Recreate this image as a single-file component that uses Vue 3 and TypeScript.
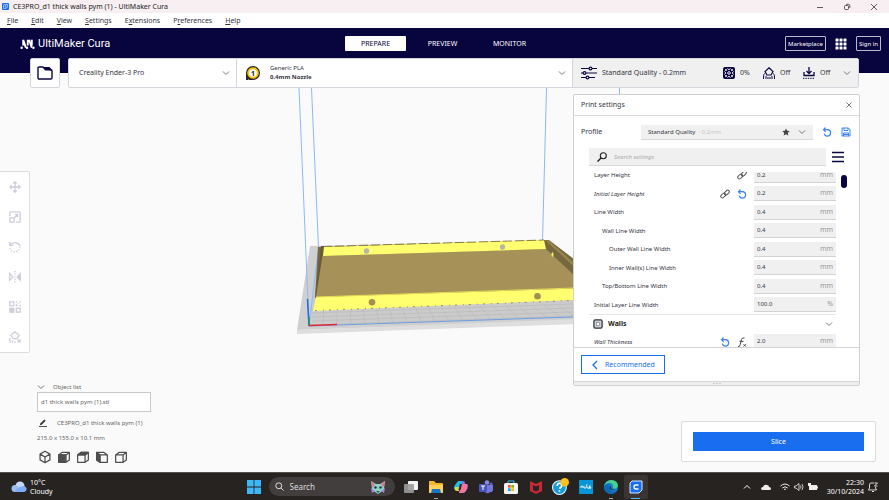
<script setup lang="ts">
import { ref } from 'vue'

interface Setting {
  label: string
  value: string
  unit: string
  level: number
  icons: string[]
  changed?: boolean
}

const menus = ['File', 'Edit', 'View', 'Settings', 'Extensions', 'Preferences', 'Help']
const menuKeys = [0, 0, 0, 0, 1, 1, 0]
const stages = ['PREPARE', 'PREVIEW', 'MONITOR']
const activeStage = ref('PREPARE')
const search = ref('')
const profile = ref('Standard Quality')
const objectName = ref('d1 thick walls pym (1).stl')

const settings = ref<Setting[]>([
  { label: 'Layer Height', value: '0.2', unit: 'mm', level: 0, icons: ['link'] },
  { label: 'Initial Layer Height', value: '0.2', unit: 'mm', level: 0, icons: ['link', 'reset'], changed: true },
  { label: 'Line Width', value: '0.4', unit: 'mm', level: 0, icons: [] },
  { label: 'Wall Line Width', value: '0.4', unit: 'mm', level: 1, icons: [] },
  { label: 'Outer Wall Line Width', value: '0.4', unit: 'mm', level: 2, icons: [] },
  { label: 'Inner Wall(s) Line Width', value: '0.4', unit: 'mm', level: 2, icons: [] },
  { label: 'Top/Bottom Line Width', value: '0.4', unit: 'mm', level: 1, icons: [] },
  { label: 'Initial Layer Line Width', value: '100.0', unit: '%', level: 0, icons: [] },
  { label: 'Walls', value: '', unit: '', level: -1, icons: [] },
  { label: 'Wall Thickness', value: '2.0', unit: 'mm', level: 0, icons: ['reset', 'fx'], changed: true },
])

const tools = ['Move', 'Scale', 'Rotate', 'Mirror', 'Per model settings', 'Support blocker']
const views = ['3D view', 'Front view', 'Top view', 'Left view', 'Right view']
const viewFaces = ['', 'M2 6h8v8H2z', 'M2 6l4-3h9l-4 3z', 'M2 3l4 3v9l-4-3z', 'M11 6l4-3v9l-4 3z']

const gridColumns = Array.from({ length: 20 }, (_, i) => i)
const gridRows = Array.from({ length: 5 }, (_, i) => i)
</script>

<template>
  <div class="window">
    <header class="titlebar">
      <svg class="app-icon" viewBox="0 0 14 14"><rect width="14" height="14" rx="2" fill="#196ef0" /><path d="M4 3h7v5l-3 3H3V4z" fill="none" stroke="#fff" /><path d="M9 5.500H6v3h3" fill="none" stroke="#fff" /></svg>
      <span class="title">CE3PRO_d1 thick walls pym (1) - UltiMaker Cura</span>
      <button class="win" aria-label="Minimise"><svg viewBox="0 0 8 8"><path d="M1 4.500h6" /></svg></button>
      <button class="win" aria-label="Restore"><svg viewBox="0 0 8 8"><rect x="1.500" y="2.500" width="4" height="4" rx="1" /><path d="M3 1.300h2.500a1.300 1.300 0 0 1 1.300 1.300V5" /></svg></button>
      <button class="win" aria-label="Close"><svg viewBox="0 0 8 8"><path d="M1 1l6 6M7 1L1 7" /></svg></button>
    </header>

    <nav class="menubar">
      <a v-for="(menu, i) in menus" :key="menu" href="#">{{ menu.slice(0, menuKeys[i]) }}<u>{{ menu.charAt(menuKeys[i]) }}</u>{{ menu.slice(menuKeys[i] + 1) }}</a>
    </nav>

    <div class="topbar">
      <div class="brand">
        <svg viewBox="0 0 28 22" fill="none" stroke="#fff" stroke-width="3.600" stroke-linecap="round"><path d="M6 3v11M6 3l5 15M14.500 3v11M17 3l5 15" stroke-linecap="butt" /><path d="M3 18h.1M13 18h.1M25 18h.1" stroke-width="4.500" /><path d="M22 3v11" stroke-linecap="butt" /></svg>
        <span>UltiMaker Cura</span>
      </div>
      <div class="stages">
        <button v-for="stage in stages" :key="stage" :class="{ active: stage === activeStage }" @click="activeStage = stage">{{ stage }}</button>
      </div>
      <div class="account">
        <button>Marketplace</button>
        <button class="apps" aria-label="Applications"><svg viewBox="0 0 12 12" fill="#fff"><template v-for="y in 3" :key="y"><rect v-for="x in 3" :key="x" :x="x * 4 - 3.500" :y="y * 4 - 3.500" width="3" height="3" rx=".6" /></template></svg></button>
        <button>Sign in</button>
      </div>
    </div>

    <div class="config">
      <button class="folder" aria-label="Open file"><svg viewBox="0 0 16 14"><path d="M1 11.500V2.200Q1 1 2.200 1H6l2.500 2.700h5.300q1.200 0 1.200 1.200v6.900q0 1.200-1.200 1.200H2.200Q1 13 1 11.800z" fill="none" stroke="#0b0740" stroke-width="1.400" /><path d="M6.500 1h6L15 3.800v1L8.500 3.500z" fill="#0b0740" /></svg></button>
      <div class="selectors">
        <button class="machine"><span>Creality Ender-3 Pro</span><svg class="chevron" viewBox="0 0 8 8"><path d="M1 2.500l3 3 3-3" /></svg></button>
        <button class="material">
          <svg class="spool" viewBox="0 0 16 16"><path d="M1 15V8a7 7 0 1 1 7 7H4l-1-1v1z" fill="#262626" /><circle cx="8" cy="8" r="5.800" fill="#ffc20f" /><circle cx="8" cy="8" r="3.800" fill="#fff" /><text x="8" y="10.500" text-anchor="middle">1</text></svg>
          <span class="material-name"><span>Generic PLA</span><strong>0.4mm Nozzle</strong></span>
          <svg class="chevron" viewBox="0 0 8 8"><path d="M1 2.500l3 3 3-3" /></svg>
        </button>
        <button class="summary">
          <svg class="sliders" viewBox="0 0 16 14" fill="none" stroke="#0b0740" stroke-width="1.200"><path d="M0 2.500h8M11 2.500h5M0 7h2M5 7h11M0 11.500h5M8 11.500h6" /><circle cx="9.500" cy="2.500" r="1.400" /><circle cx="3.500" cy="7" r="1.400" /><circle cx="6.500" cy="11.500" r="1.400" /></svg>
          <span class="quality">Standard Quality - 0.2mm</span>
          <svg class="ico" viewBox="0 0 12 12"><rect width="12" height="12" rx="2" fill="#0b0740" /><g fill="none" stroke="#f0f0f0" stroke-width="1"><circle cx="6" cy="6" r="1.300" /><path d="M4.500 1.500Q6 4 7.500 1.500M4.500 10.500Q6 8 7.500 10.500M1.500 4.500Q4 6 1.500 7.500M10.500 4.500Q8 6 10.500 7.500" /></g><g fill="#f0f0f0"><circle cx="3" cy="3" r="1" /><circle cx="9" cy="3" r="1" /><circle cx="3" cy="9" r="1" /><circle cx="9" cy="9" r="1" /></g></svg>
          <span class="stat">0%</span>
          <svg class="ico" viewBox="0 0 12 12" fill="none" stroke="#0b0740"><path d="M6 .8L10 4.500 8 8H4L2 4.500z" stroke-width="1.200" /><path d="M1.500 6.500C.5 8 .5 9 .5 12M3 9v3M5 10v2M7 10v2M9 9v3M10.500 6.500c1 1.500 1 2.500 1 5.500" /></svg>
          <span class="stat">Off</span>
          <svg class="ico" viewBox="0 0 12 12" fill="none" stroke="#0b0740"><path d="M6 0v6M3.500 4L6 6.500 8.500 4M1 5v3.500h10V5" stroke-width="1.300" /><path d="M0 11.300h12" stroke-dasharray="1.400 1" /></svg>
          <span class="stat">Off</span>
          <svg class="chevron" viewBox="0 0 8 8"><path d="M1 2.500l3 3 3-3" /></svg>
        </button>
      </div>
    </div>

    <main class="workspace">
      <svg class="scene" viewBox="0 88 889 384" preserveAspectRatio="xMidYMin slice" aria-hidden="true">
        <polygon points="310,246 545,240 660,318 297,330" fill="#d0d0d0" />
        <polygon points="297,330 660,316 660,321 297,334" fill="#dedede" />
        <polygon points="319,248 545,242 650,315 309,326" fill="#cbcbcb" />
        <g stroke="#b5b5b9" stroke-width=".5">
          <path v-for="r in gridRows" :key="'r' + r" :d="`M312 ${309 + r * 4}L660 ${297 + r * 4}`" />
          <path v-for="c in gridColumns" :key="'c' + c" :d="`M${311 + c * 13} 306L${309 + c * 14} ${326 - c * .5}`" />
        </g>
        <g fill="none" stroke="#8cb9f5"><path d="M299 88l10 238M311.500 88l7 160-9.500 78M546.500 88L542.500 241M619.500 88v6" /><path d="M309 326l351-12" stroke="#6c9de4" /></g>
        <polygon points="318,247 545,240 549,240 660,325 660,290 315,298" fill="#76683f" />
        <polygon points="321,256 546,249 590,290 315,297" fill="#a69159" />
        <polygon points="321,246 324,246 316,297 315,297" fill="#685b35" />
        <polygon points="324,247 544,240 546,249 323,256" fill="#ffff70" />
        <polygon points="316,297 590,288 600,299 313,311" fill="#ffff70" />
        <path d="M545 240l4 .5 41 37v4z" fill="#98844d" />
        <path d="M323 246.500L544 240" fill="none" stroke="#79682f" stroke-dasharray="9 3" stroke-width=".8" />
        <path d="M316 297l258-9" fill="none" stroke="#e5d957" />
        <path d="M315 310.500l258-10" fill="none" stroke="#77703f" stroke-dasharray="2 6 1 5" stroke-width=".7" />
        <circle cx="366.500" cy="251" r="2.700" fill="#b7b5aa" /><circle cx="502.500" cy="247" r="2.700" fill="#b7b5aa" />
        <circle cx="372" cy="302.300" r="3.300" fill="#a48e50" /><circle cx="537.500" cy="296.300" r="3.300" fill="#a48e50" />
        <ellipse cx="552.500" cy="254.500" rx="1" ry="2.200" fill="#f7f069" />
        <path d="M307.500 299l1.500 27" stroke="#1769ed" stroke-width="1.500" /><path d="M309 326v-9" stroke="#17965d" stroke-width="1.400" /><path d="M309 325.500l28-1" stroke="#df2b35" stroke-width="1.600" />
      </svg>

      <aside class="left">
        <div class="tools">
          <button v-for="(tool, i) in tools" :key="tool" :aria-label="tool" disabled>
            <svg viewBox="0 0 14 14" fill="none" stroke="#cfccdc" stroke-width="1.500">
              <path v-if="i === 0" d="M7 1v12M1 7h12M5 3l2-2 2 2M5 11l2 2 2-2M3 5L1 7l2 2M11 5l2 2-2 2" />
              <template v-else-if="i === 1"><path d="M1 6V2q0-1 1-1h10q1 0 1 1v10q0 1-1 1H8" /><rect x="1" y="8" width="5" height="5" /><path d="M6 8l4-4M7 4h3v3" /></template>
              <template v-else-if="i === 2"><path d="M1 1v4h4M1.500 4.500C4 .5 11 1 13 6" /><path d="M1 8c1 6 10 7 12-1" stroke-dasharray="1.600 1.600" /></template>
              <template v-else-if="i === 3"><path d="M.7 3v8L4.500 7z" /><path d="M13.300 3v8L9.500 7z" fill="#cfccdc" /><path d="M7 0v14" stroke-dasharray="1.500 1.500" /></template>
              <template v-else-if="i === 4"><rect x="1" y="1" width="4.500" height="4.500" /><rect x="1" y="8.500" width="4.500" height="4.500" fill="#cfccdc" /><rect x="8.500" y="8.500" width="4.500" height="4.500" /><path d="M8 1h2M12 1h2M8 3.500l1 1M11 3h1M12 5.500h2M8 5.500h2" /></template>
              <template v-else><path d="M7 .8L12 5 9 9H5L2 5z" /><path d="M1 8v6M4 11v3M7 12v2M10 10l3.500 3.500M13.500 10L10 13.500" /></template>
            </svg>
          </button>
        </div>
        <section class="objects">
          <button class="toggle"><svg class="chevron" viewBox="0 0 8 8"><path d="M1 2.500l3 3 3-3" /></svg><span>Object list</span></button>
          <input v-model="objectName" aria-label="Object" class="object" />
          <div class="job"><svg viewBox="0 0 9 9"><path d="M0 8.500h9" stroke="#333" /><path d="M1 7l.5-2L6 .5 7.500 2 3 6.500z" fill="#333" /></svg><span>CE3PRO_d1 thick walls pym (1)</span></div>
          <p>215.0 x 155.0 x 10.1 mm</p>
          <div class="views">
            <button v-for="(view, i) in views" :key="view" :aria-label="view">
              <svg viewBox="0 0 17 17" fill="none" stroke="#4e4e4e" stroke-width="1.500" stroke-linejoin="round">
                <path v-if="i === 0" d="M8.500 1.500l6 3.500v7l-6 3.500-6-3.500V5zM2.500 5l6 3.500L14.500 5M8.500 8.500v7" />
                <template v-else-if="i === 3"><path d="M6 6h9v9H6zM2 3l4 3v9l-4-3zM2 3h9l4 3" /><path :d="viewFaces[i]" fill="#4e4e4e" /></template>
                <template v-else><path d="M2 6h9v9H2zM2 6l4-3h9l-4 3M15 3v9l-4 3" /><path v-if="i < 3" :d="viewFaces[i]" fill="#4e4e4e" /></template>
              </svg>
            </button>
          </div>
        </section>
      </aside>

      <div class="right">
        <section class="panel">
          <div class="panel-head"><span>Print settings</span><button aria-label="Close settings"><svg viewBox="0 0 8 8"><path d="M1.500 1.500l5 5M6.500 1.500l-5 5" /></svg></button></div>
          <div class="profile">
            <label for="profile">Profile</label>
            <div class="profile-box">
              <select id="profile" v-model="profile"><option>Standard Quality</option></select>
              <span class="muted">- 0.2mm</span>
              <svg class="star" viewBox="0 0 10 10"><path d="M5 .5l1.400 3 3.200.4-2.400 2.200.7 3.300L5 7.700 2.100 9.400l.7-3.300L.4 3.900l3.200-.4z" fill="#444" /></svg>
              <svg class="chevron" viewBox="0 0 8 8"><path d="M1 2.500l3 3 3-3" /></svg>
            </div>
            <button aria-label="Discard changes"><svg viewBox="0 0 10 10" fill="none" stroke="#3b82f2" stroke-width="1.200"><path d="M3.500.5L1.500 2.700l2.200 2.200M1.500 2.700H5.500a3.200 3.200 0 1 1-3.200 4" /></svg></button>
            <button aria-label="Save profile"><svg viewBox="0 0 10 10" fill="none" stroke="#3b82f2"><path d="M1 1h6.500L9 2.500V9H1zM3 1v2.500h4V1M2.500 9V6h5v3M3 7.500h4" /></svg></button>
          </div>
          <div class="searchline">
            <div class="search">
              <svg viewBox="0 0 10 10" fill="none" stroke="#222"><circle cx="6.300" cy="3.700" r="3" stroke-width="1.100" /><path d="M4 6L.5 9.500" stroke-width="1.500" /></svg>
              <input v-model="search" aria-label="Search settings" placeholder="Search settings" />
            </div>
            <button aria-label="Setting visibility"><svg viewBox="0 0 12 12"><path d="M0 1.500h12M0 6h12M0 10.500h12" stroke="#0b0740" stroke-width="1.300" /></svg></button>
          </div>
          <div class="list">
            <div class="rows">
              <template v-for="(item, i) in settings" :key="item.label">
                <button v-if="item.level < 0" class="category">
                  <svg class="wall" viewBox="0 0 10 10"><rect x=".9" y=".9" width="8.200" height="8.200" rx="1.300" fill="#ccd0d4" stroke="#33363e" stroke-width="1.300" /><rect x="3.500" y="3.500" width="3" height="3" fill="#fff" stroke="#777" stroke-width=".6" /></svg>
                  <strong>{{ item.label }}</strong>
                  <svg class="chevron" viewBox="0 0 8 8"><path d="M1 2.500l3 3 3-3" /></svg>
                </button>
                <div v-else class="row" :class="['level-' + item.level, { changed: item.changed }]">
                  <label :for="'setting-' + i">{{ item.label }}</label>
                  <svg v-for="icon in item.icons" :key="icon" class="row-icon" viewBox="0 0 10 10" fill="none">
                    <g v-if="icon === 'link'" stroke="#555"><rect x="4" y="2" width="5.600" height="3.200" rx="1.600" transform="rotate(-45 6.800 3.600)" /><rect x=".4" y="4.900" width="5.600" height="3.200" rx="1.600" transform="rotate(-45 3.200 6.500)" /></g>
                    <path v-else-if="icon === 'reset'" d="M3.500.5L1.500 2.700l2.200 2.200M1.500 2.700H5.500a3.200 3.200 0 1 1-3.200 4" stroke="#3b82f2" stroke-width="1.200" />
                    <path v-else d="M1 9.500Q2.800 10 3.300 7.500L4.500 2.500Q5 .3 7.500 1M2.500 4.300h4M6.500 7.200l2.300 2.300M8.800 7.200L6.500 9.500" stroke="#444" />
                  </svg>
                  <div class="field"><input :id="'setting-' + i" v-model="item.value" /><span>{{ item.unit }}</span></div>
                </div>
              </template>
            </div>
            <div class="scrollbar"><i></i></div>
          </div>
          <div class="panel-foot"><button><svg viewBox="0 0 8 10"><path d="M6 1L2 5l4 4" fill="none" stroke="#196ef0" stroke-width="1.300" /></svg><span>Recommended</span></button></div>
          <div class="grip"><i></i><i></i><i></i></div>
        </section>
        <section class="action"><button>Slice</button></section>
      </div>
    </main>

    <footer class="taskbar">
      <div class="weather">
        <svg viewBox="0 0 16 12"><circle cx="9" cy="5" r="4.500" fill="#c5d8fa" /><circle cx="4" cy="7.500" r="3.500" fill="#9bbcf4" /><path d="M4 11h9a3 3 0 1 0-2-5.500Q6 6 4 11z" fill="#7facf5" /></svg>
        <span>10°C<br />Cloudy</span>
      </div>
      <div class="dock">
        <button aria-label="Start"><svg viewBox="0 0 14 14" fill="#3bb8f5"><path d="M0 0h6.600v6.600H0zM7.400 0H14v6.600H7.400zM0 7.400h6.600V14H0zM7.400 7.400H14V14H7.400z" /></svg></button>
        <label class="find"><svg viewBox="0 0 10 10" fill="none" stroke="#eee"><circle cx="4.200" cy="4.200" r="3.300" /><path d="M6.700 6.700L9.500 9.500" /></svg><input aria-label="Search Windows" placeholder="Search" />
          <svg class="mascot" viewBox="0 0 16 14"><path d="M1 1l5 3h4l5-3-1 8-3 3-3 2-3-2-3-3z" fill="#8cd6c4" /><path d="M1 1l4 3-2 4zM15 1l-4 3 2 4z" fill="#df7692" /><path d="M1 8l4 3-3 2zM15 8l-4 3 3 2z" fill="#b681dd" /><circle cx="5.500" cy="7.500" r="1.200" fill="#273549" /><circle cx="10.500" cy="7.500" r="1.200" fill="#273549" /><path d="M6 11h4l-2 2z" fill="#3c514e" /></svg>
        </label>
        <button aria-label="Task view"><svg viewBox="0 0 14 14"><rect x="4" y="1" width="10" height="9" rx="1" fill="#f4f4f4" /><rect y="4" width="10" height="9" rx="1" fill="#9b9b9b" opacity=".9" /></svg></button>
        <button class="running" aria-label="File Explorer"><svg viewBox="0 0 14 14"><path d="M0 1h5l2 2h6q1 0 1 1v9H0z" fill="#f2b92b" /><path d="M0 5h14v8H0z" fill="#ffd35b" /><path d="M3 9h8l1 4H2z" fill="#1575cd" /></svg></button>
        <button aria-label="Copilot"><svg viewBox="0 0 14 14"><path d="M4 1h5L6 10H1Q-1 8 1 5z" fill="#29b8e0" /><path d="M1 7h5l-1 4H3Q0 11 1 7z" fill="#d9d84b" /><path d="M9 1q2 0 2 3h2q2 3-1 7-1 2-3 2H5l3-9z" fill="#aa69ec" /><path d="M8 4h5q1 1 0 4l-2 4-3 1H5z" fill="#f4759b" /><path d="M6 4h2L6.500 10h-2z" fill="#282424" /></svg></button>
        <button aria-label="Teams"><svg viewBox="0 0 14 14"><circle cx="8" cy="2.500" r="2.300" fill="#858bf0" /><circle cx="12" cy="4" r="1.500" fill="#6268c8" /><path d="M5 5h9v5q-1 3-3 2-3 3-6-1z" fill="#7378da" /><rect y="4" width="8" height="8" rx="1" fill="#4b53bc" /><path d="M2 6h4M4 6v4" stroke="#fff" /></svg></button>
        <button aria-label="Store"><svg viewBox="0 0 14 14"><path d="M4 3V1h6v2" fill="none" stroke="#48b8ed" /><rect y="3" width="14" height="11" rx="1.500" fill="#f5f5f5" /><path d="M4 5h2.700v2.700H4z" fill="#ef5b2d" /><path d="M7.300 5H10v2.700H7.300z" fill="#7fba00" /><path d="M4 8.300h2.700V11H4z" fill="#19a5e8" /><path d="M7.300 8.300H10V11H7.300z" fill="#fbb614" /></svg></button>
        <button aria-label="McAfee"><svg viewBox="0 0 14 14"><path d="M1 1l6 3 6-3v10l-6 3-6-3zM4 5v5l3 1.500L10 10V5L7 6.500z" fill="#c92936" fill-rule="evenodd" /></svg></button>
        <button class="assistant" aria-label="Help assistant"><svg viewBox="0 0 16 16"><circle cx="7" cy="9" r="6.500" fill="#1c9cd5" stroke="#e7f7ff" /><path d="M4.800 7.500Q5 5 7.300 5T9 8L7 10M7 11.500v1.500" fill="none" stroke="#fff" stroke-width="1.500" /><circle cx="12" cy="4" r="4" fill="#ffc21b" /></svg></button>
        <button aria-label="MyHP"><svg viewBox="0 0 14 14"><rect width="14" height="14" fill="#0795d8" /><path d="M2 8V6l1 .5L4 6v2M5 6v2h2l1-4M8 7h1v2M10 9l1-4M10 7h2l-1 2" fill="none" stroke="#fff" stroke-width=".8" /></svg></button>
        <button class="running" aria-label="Edge"><svg viewBox="0 0 14 14"><circle cx="7" cy="7" r="7" fill="#1583d0" /><path d="M0 7Q1 0 8 0q6 1 6 6-2 4-5 2Q10 3 5 3 2 3 0 7z" fill="#48d18c" /><path d="M0 7q2-4 6-3-3 3 0 6 3 3 7 1-4 4-9 2-4-2-4-6z" fill="#1264b7" /><path d="M7 6q-2 4 5 4-4 1-6-1T7 6z" fill="#282424" /></svg></button>
        <button class="running current" aria-label="Cura"><svg viewBox="0 0 14 14"><path d="M3 1h10v9l-3 3H1V3z" fill="#196ef0" stroke="#dbe9ff" /><path d="M9.500 5H7Q5 5 5 7t2 2h2.500" fill="none" stroke="#fff" stroke-width="1.300" /></svg></button>
      </div>
      <div class="tray">
        <svg viewBox="0 0 10 10"><path d="M2 6.500l3-3 3 3" fill="none" stroke="#fff" /></svg>
        <svg class="cloud" viewBox="0 0 10 10"><path d="M2 8Q0 8 0 6.500T2 5q1-3 4-2 2 0 2 2 2 0 2 1.500T8.500 8z" fill="#eee" /></svg>
        <svg viewBox="0 0 10 10" fill="none" stroke="#eee"><path d="M.5 4Q5 0 9.500 4M2.300 6Q5 3.500 7.700 6M4 7.500q1-1 2 0" /></svg>
        <svg viewBox="0 0 10 10" fill="none" stroke="#eee"><path d="M.5 4H2l3-2.500v7L2 6H.5zM6.500 3.500q1 1.500 0 3M8 2q2 3 0 6" stroke-width=".8" /></svg>
        <svg viewBox="0 0 10 10"><path d="M0 1h3v2h6v1.500h1v2H9V8H1V4H0z" fill="#eee" /></svg>
        <span class="clock">22:30<br />30/10/2024</span>
        <svg viewBox="0 0 10 10" fill="none" stroke="#eee"><path d="M6 1H3q-1.500 0-1.500 2v3L.5 8h8l-1-2V5M4 9.500h2M6.500 1h3L6.500 4h3" stroke-width=".9" /></svg>
      </div>
    </footer>
  </div>
</template>

<style>
body { margin: 0; }
</style>

<style scoped>
* { box-sizing: border-box; }
.window { display: flex; flex-direction: column; min-height: 100vh; background: #fafafa; color: #35353f; font: 7px/10px "Noto Sans", sans-serif; }
button, input, select { font: inherit; color: inherit; border: 0; background: none; padding: 0; margin: 0; min-width: 0; border-radius: 0; }
svg { display: block; flex: none; }
a { color: inherit; text-decoration: none; }
.chevron { width: 8px; height: 8px; fill: none; stroke: #777; }

.titlebar { display: flex; align-items: center; height: 13px; background: #f7eff2; padding: 0 2px; color: #222; }
.app-icon { width: 7px; height: 7px; margin-right: 4px; }
.title { flex: 1; }
.win { width: 27px; height: 13px; display: flex; align-items: center; justify-content: center; }
.win svg { width: 8px; height: 8px; fill: none; stroke: #333; stroke-width: .8; }
.menubar { display: flex; align-items: center; gap: 13px; height: 15px; padding: 0 7px; background: #fff; }
.topbar { display: grid; grid-template-columns: 1fr auto 1fr; align-items: center; height: 45px; padding: 0 8px 14px 4px; background: #08043e; color: #fff; }
.brand { display: flex; align-items: center; gap: 3px; padding-left: 16px; font: 11px/14px Roboto, sans-serif; }
.brand svg { width: 15px; height: 12px; }
.stages { display: flex; gap: 6px; }
.stages button { width: 61px; height: 15px; border-radius: 1px; }
.stages .active { background: #fff; color: #08043e; }
.account { display: flex; justify-content: flex-end; align-items: center; gap: 9px; font-size: 6px; }
.account button { height: 15px; border: 1px solid #bbb9cc; border-radius: 1px; padding: 0 2px; }
.account .apps { border: 0; padding: 0; height: 12px; }
.apps svg { width: 12px; height: 12px; }

.config { display: flex; gap: 8px; height: 30px; margin: -15px 30px 0; position: relative; z-index: 1; }
.folder { width: 30px; display: flex; align-items: center; justify-content: center; background: #fff; border: 1px solid #d5d5dc; border-radius: 2px; }
.folder svg { width: 16px; height: 14px; }
.selectors { flex: 1; display: flex; background: #fff; border: 1px solid #d5d5dc; border-radius: 2px; }
.selectors button { display: flex; align-items: center; text-align: left; }
.machine { width: 168px; padding: 0 6px 0 10px; border-right: 1px solid #d5d5dc; justify-content: space-between; }
.material { flex: 1; padding: 0 6px 0 8px; }
.spool { width: 16px; height: 16px; margin-right: 9px; }
.spool text { font-size: 7px; font-weight: 700; fill: #222; }
.material-name { flex: 1; display: flex; flex-direction: column; font-size: 6px; line-height: 9px; }
.selectors .summary { width: 286px; background: #f0f0f0; border-left: 1px solid #d5d5dc; padding: 0 7px 0 8px; }
.sliders { width: 16px; height: 14px; margin-right: 5px; }
.quality { flex: 1; }
.ico { width: 12px; height: 12px; margin-right: 5px; }
.stat { min-width: 11px; margin-right: 12px; }

.workspace { position: relative; flex: 1; display: flex; justify-content: space-between; overflow: hidden; }
.scene { position: absolute; inset: 0; width: 100%; height: 100%; }
.left, .right { position: relative; display: flex; flex-direction: column; justify-content: space-between; }
.left { padding: 83px 0 7px; }
.tools { width: 30px; background: #fff; border: 1px solid #dcdce0; border-left: 0; border-radius: 0 2px 2px 0; }
.tools button { display: flex; align-items: center; justify-content: center; width: 29px; height: 30px; }
.tools button svg { width: 12px; height: 12px; }
.objects { display: flex; flex-direction: column; margin-left: 37px; color: #666; font-size: 6px; }
.toggle { display: flex; align-items: center; gap: 8px; height: 11px; }
.object { width: 114px; height: 20px; border: 1px solid #c8c8cc; background: #fff; padding: 0 3px; }
.job { display: flex; align-items: center; gap: 10px; height: 21px; padding-left: 2px; }
.job svg { width: 8px; height: 8px; }
.objects p { margin: 0; height: 12px; }
.views { display: flex; gap: 3px; margin-top: 4px; }
.views button { padding: 1px; }
.views svg { width: 14px; height: 14px; }

.right { padding: 6px 13px 10px 0; align-items: flex-end; }
.panel { width: 287px; margin-right: 16px; background: #fff; border: 1px solid #cfcfd4; border-radius: 2px; }
.panel-head { display: flex; align-items: center; justify-content: space-between; height: 21px; padding: 0 6px 0 7px; border-bottom: 1px solid #dcdce0; }
.panel-head svg { width: 8px; height: 8px; stroke: #555; stroke-width: .8; }
.profile { display: flex; align-items: center; height: 32px; padding: 0 8px 0 7px; }
.profile label { width: 60px; }
.profile-box { flex: 1; display: flex; align-items: center; height: 15px; margin-right: 9px; padding: 0 7px; background: #f0f0f0; border-bottom: 1px solid #d8d8d8; font-size: 6px; }
.profile-box select { appearance: none; }
.muted { flex: 1; margin-left: 2px; color: #c8c8c8; }
.star { width: 8px; height: 8px; margin-right: 8px; }
.profile button { width: 10px; margin-right: 9px; }
.profile button:last-child { margin-right: 0; }
.searchline { display: flex; gap: 6px; align-items: center; padding: 0 15px; height: 18px; }
.search { flex: 1; height: 18px; display: flex; align-items: center; gap: 7px; padding: 0 8px; background: #f0f0f0; border-bottom: 1px solid #d8d8d8; font-size: 6px; }
.search svg { width: 10px; height: 10px; }
.search input { flex: 1; font-style: italic; }
.search input::placeholder { color: #aaa; opacity: 1; }
.searchline button svg { width: 12px; height: 12px; }
.list { display: flex; height: 176px; margin-top: 6px; overflow: hidden; border-bottom: 1px solid #d5d5d9; padding: 0 12px 0 15px; font-size: 6px; }
.rows { flex: 1; display: grid; grid-auto-rows: 1fr; height: 185px; margin-top: -6px; }
.row { display: flex; align-items: center; padding-left: 5px; gap: 7px; }
.row label { flex: 1; }
.changed label { font-style: italic; }
.level-1 { padding-left: 13px; }
.level-2 { padding-left: 20px; }
.row-icon { width: 10px; height: 10px; }
.field { display: flex; align-items: center; width: 82px; height: 15px; padding: 0 3px; background: #f0f0f0; border-bottom: 1px solid #d3d3d3; }
.field input { flex: 1; width: 20px; }
.field span { color: #999; font-size: 7px; }
.category { display: flex; align-items: center; gap: 5px; padding: 0 3px 0 4px; border-top: 1px solid #e5e5e8; text-align: left; }
.category strong { flex: 1; font-size: 7px; color: #222; }
.wall { width: 10px; height: 10px; }
.scrollbar { width: 6px; margin: 3px 0 0 5px; }
.scrollbar i { display: block; height: 13px; border-radius: 3px; background: #08043e; }
.panel-foot { padding: 7px; height: 33px; }
.panel-foot button { display: flex; align-items: center; gap: 6px; height: 19px; width: 84px; padding: 0 9px; border: 1px solid #196ef0; color: #196ef0; }
.panel-foot svg { width: 8px; height: 10px; }
.grip { display: flex; justify-content: center; align-items: center; gap: 1px; height: 4px; background: #eee; border-top: 1px solid #d5d5d9; }
.grip i { width: 2px; height: 1px; background: #ccc; }
.action { width: 195px; padding: 10px 11px; background: #fff; border: 1px solid #dcdce0; border-radius: 2px; }
.action button { display: block; width: 100%; height: 19px; background: #196ef0; color: #fff; }

.taskbar { display: grid; grid-template-columns: 1fr auto 1fr; align-items: center; height: 28px; background: #272321; color: #fff; border-top: 1px solid #554f4c; padding: 0 11px; line-height: 9px; }
.weather { display: flex; align-items: center; gap: 3px; }
.weather svg { width: 16px; height: 12px; }
.dock { display: flex; align-items: center; gap: 1px; }
.dock button { position: relative; width: 24px; height: 24px; display: flex; align-items: center; justify-content: center; border-radius: 2px; }
.dock button svg { width: 14px; height: 14px; }
.dock .assistant svg { width: 17px; height: 17px; }
.find { display: flex; align-items: center; width: 126px; height: 19px; margin: 0 3px 0 2px; padding: 0 9px 0 6px; gap: 6px; border-radius: 10px; background: #423e3d; }
.find svg { width: 9px; height: 9px; }
.find input { flex: 1; width: 40px; font-size: 8px; }
.find input::placeholder { color: #ddd; opacity: 1; }
.find .mascot { width: 16px; height: 14px; }
.running::after { content: ""; position: absolute; bottom: 0; width: 4px; height: 1px; background: #aaa; }
.dock .current { background: #3a3533; }
.current::after { width: 9px; background: #4cc2ff; }
.tray { display: flex; justify-content: flex-end; align-items: center; gap: 4px; }
.tray svg { width: 10px; height: 10px; }
.tray .cloud { margin: 0 5px; }
.clock { text-align: right; margin-left: 5px; }
</style>
